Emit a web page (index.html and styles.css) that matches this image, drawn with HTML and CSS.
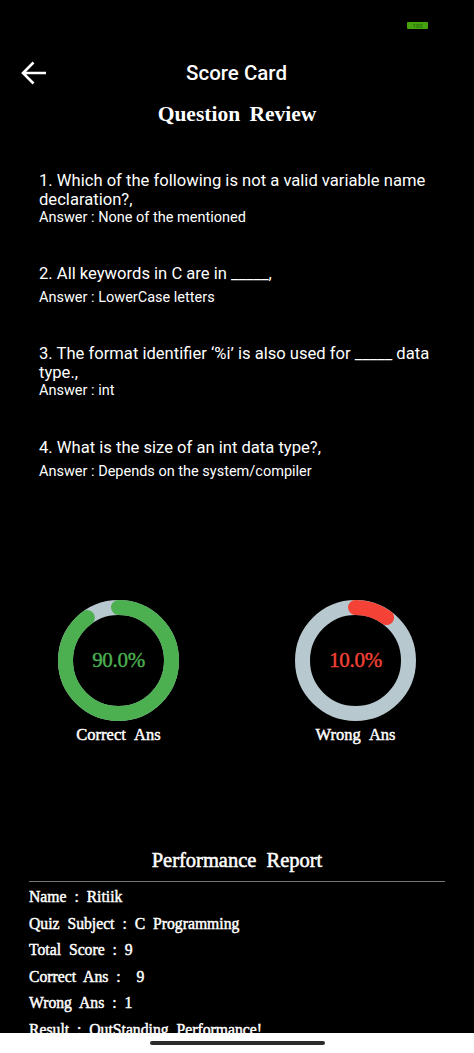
FILE: index.html
```html
<!DOCTYPE html>
<html lang="en">
<head>
<meta charset="utf-8">
<title>Score Card</title>
<link rel="stylesheet" href="styles.css">
</head>
<body>
<div class="screen">
  <main class="content">
    <div class="status"><span class="battery">100</span></div>
    <header class="appbar">
      <svg class="back" viewBox="0 0 26 24" width="26" height="24"><path d="M25 12H2M12.5 1.5L2 12l10.500 10.500" fill="none" stroke="#fff" stroke-width="2.600"/></svg>
      <h1 class="title">Score Card</h1>
    </header>
    <h2 class="review-title">Question Review</h2>
    <section class="questions">
      <div class="q q1"><p class="q-text">1. Which of the following is not a valid variable name declaration?,</p><p class="q-ans">Answer : None of the mentioned</p></div>
      <div class="q q2"><p class="q-text">2. All keywords in C are in _____,</p><p class="q-ans">Answer : LowerCase letters</p></div>
      <div class="q q3"><p class="q-text">3. The format identifier ‘%i’ is also used for _____ data type.,</p><p class="q-ans">Answer : int</p></div>
      <div class="q q4"><p class="q-text">4. What is the size of an int data type?,</p><p class="q-ans">Answer : Depends on the system/compiler</p></div>
    </section>
    <section class="charts">
      <figure class="chart">
        <div class="ring">
          <svg viewBox="0 0 121 121" width="121" height="121"><circle class="track" cx="60.500" cy="60.500" r="53"/><circle class="arc arc-green" cx="60.500" cy="60.500" r="53" pathLength="100" stroke-dasharray="90 100" transform="rotate(-90 60.500 60.500)"/></svg>
          <span class="pct pct-green">90.0%</span>
        </div>
        <figcaption class="cap">Correct Ans</figcaption>
      </figure>
      <figure class="chart">
        <div class="ring">
          <svg viewBox="0 0 121 121" width="121" height="121"><circle class="track" cx="60.500" cy="60.500" r="53"/><circle class="arc arc-red" cx="60.500" cy="60.500" r="53" pathLength="100" stroke-dasharray="10 100" transform="rotate(-90 60.500 60.500)"/></svg>
          <span class="pct pct-red">10.0%</span>
        </div>
        <figcaption class="cap">Wrong Ans</figcaption>
      </figure>
    </section>
    <section class="report">
      <h2 class="report-title">Performance Report</h2>
      <div class="rule"></div>
      <p class="row">Name : Ritiik</p>
      <p class="row">Quiz Subject : C Programming</p>
      <p class="row">Total Score : 9</p>
      <p class="row">Correct Ans :&nbsp; 9</p>
      <p class="row">Wrong Ans : 1</p>
      <p class="row">Result : OutStanding Performance!</p>
    </section>
  </main>
  <footer class="homebar"><span class="indicator"></span></footer>
</div>
</body>
</html>
```

FILE: styles.css
```css
* { box-sizing: border-box; margin: 0; padding: 0; }
html, body { background: #000; }
.screen { width: 474px; height: 1053px; display: flex; flex-direction: column; overflow: hidden; font-family: Roboto, sans-serif; color: #fff; }
.content { height: 1033px; overflow: hidden; background: #000; flex: none; }
.status { height: 42px; padding: 22px 46px 0 0; display: flex; justify-content: flex-end; }
.battery { width: 21px; height: 7px; background: #46a30f; border-radius: 1px; color: #1c5c08; font-size: 6px; line-height: 7px; text-align: center; display: block; }
.appbar { height: 40px; margin-top: 11px; padding-left: 21px; display: flex; align-items: center; }
.back { flex: none; }
.title { flex: 1; text-align: center; font-size: 20.500px; font-weight: 500; margin-left: -47px; padding-right: 1px; }
.review-title { margin-top: 8px; text-align: center; font-family: "Liberation Serif", serif; font-size: 21.500px; font-weight: 700; line-height: 26px; word-spacing: 4px; }
.questions { padding: 44px 39px 0; }
.q-text { font-size: 16.600px; line-height: 19px; }
.q2 .q-text, .q4 .q-text { min-height: 25px; }
.q-ans { font-size: 14.500px; line-height: 17px; }
.q { margin-bottom: 38px; }
.q3 { margin-bottom: 39px; }
.charts { display: flex; margin-top: 120px; padding-left: 58px; gap: 116px; }
.chart { width: 121px; display: flex; flex-direction: column; align-items: center; }
.ring { width: 121px; height: 121px; position: relative; }
.ring svg { display: block; }
.track { fill: none; stroke: #b8c8cf; stroke-width: 15; }
.arc { fill: none; stroke-width: 15; stroke-linecap: round; }
.arc-green { stroke: #4caf50; }
.arc-red { stroke: #f44336; }
.pct { position: absolute; inset: 0; display: flex; align-items: center; justify-content: center; font-family: "Liberation Serif", serif; font-size: 21px; letter-spacing: -0.300px; -webkit-text-stroke: 0.400px currentColor; }
.pct-green { color: #4caf50; }
.pct-red { color: #f44336; }
.cap { margin-top: 4px; font-family: "Liberation Serif", serif; font-size: 16.500px; line-height: 20px; word-spacing: 5px; white-space: nowrap; -webkit-text-stroke: 0.450px #fff; }
.report { margin-top: 102px; padding: 0 29px; }
.report-title { text-align: center; font-family: "Liberation Serif", serif; font-size: 20.500px; font-weight: 400; line-height: 26px; word-spacing: 5px; -webkit-text-stroke: 0.500px #fff; }
.rule { height: 1px; background: #777; margin-top: 8px; }
.row { font-family: "Liberation Serif", serif; font-size: 15.700px; line-height: 26.500px; word-spacing: 4px; white-space: nowrap; -webkit-text-stroke: 0.450px #fff; }
.rule + .row { margin-top: 2px; }
.homebar { flex: 1; background: #fff; display: flex; justify-content: center; padding-top: 8px; }
.indicator { width: 175px; height: 4px; background: #2b2b2b; border-radius: 2px; }
```
